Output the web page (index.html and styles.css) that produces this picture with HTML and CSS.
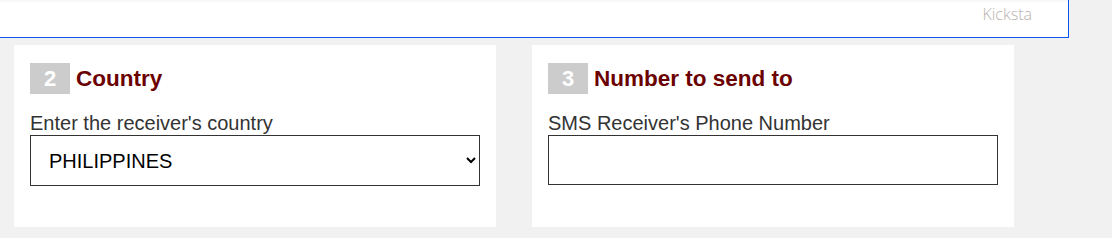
FILE: index.html
```html
<!DOCTYPE html>
<html lang="en">
<head>
    <meta charset="UTF-8">
    <meta name="viewport" content="width=device-width, initial-scale=1.0">
    <title>Send SMS</title>
    <link rel="stylesheet" href="styles.css">
</head>
<body>
    <div class="top-bar">
        <span class="brand">Kicksta</span>
    </div>

    <div class="steps">
        <div class="step-card">
            <h2 class="step-title"><span class="step-no">2</span>Country</h2>
            <label for="country">Enter the receiver's country</label>
            <select id="country" name="country">
                <option>PHILIPPINES</option>
                <option>INDONESIA</option>
                <option>MALAYSIA</option>
            </select>
        </div>
        <div class="step-card">
            <h2 class="step-title"><span class="step-no">3</span>Number to send to</h2>
            <label for="phone">SMS Receiver's Phone Number</label>
            <input type="tel" id="phone" name="phone">
        </div>
    </div>
</body>
</html>
```

FILE: styles.css
```css
body {
    font-family: "Liberation Sans", Arial, sans-serif;
    background-color: #f1f1f1;
    margin: 0;
}

.top-bar {
    width: 1069px;
    height: 38px;
    box-sizing: border-box;
    background-color: #fff;
    border-right: 1px solid #0b54f0;
    border-bottom: 1px solid #0b54f0;
    box-shadow: inset 0 3px 3px -2px rgba(0, 0, 0, 0.06);
    text-align: right;
    padding-right: 36px;
}

.brand {
    font-family: "Open Sans", sans-serif;
    font-weight: 300;
    font-size: 16px;
    line-height: 28px;
    color: #b9b4b0;
}

.steps {
    display: flex;
    gap: 36px;
    padding: 7px 14px 0;
}

.step-card {
    width: 482px;
    height: 182px;
    box-sizing: border-box;
    background-color: #fff;
    padding: 18px 16px 0;
}

.step-title {
    display: flex;
    align-items: center;
    margin: 0 0 19px;
    font-size: 22.5px;
    line-height: 31px;
    color: #6b0000;
}

.step-no {
    display: inline-block;
    width: 40px;
    height: 31px;
    margin-right: 6px;
    background-color: #ccc;
    color: #fff;
    text-align: center;
    font-size: 22px;
}

label {
    display: block;
    margin-bottom: 2px;
    font-size: 20px;
    line-height: 20px;
    color: #333;
}

select,
input[type="tel"] {
    display: block;
    width: 450px;
    height: 51px;
    box-sizing: border-box;
    border: 1px solid #333;
    border-radius: 0;
    background-color: #fff;
    font-family: "Liberation Sans", Arial, sans-serif;
    font-size: 20px;
    color: #000;
}

select {
    padding: 0 8px 0 14px;
}

input[type="tel"] {
    height: 50px;
    padding: 0 14px;
}
```
